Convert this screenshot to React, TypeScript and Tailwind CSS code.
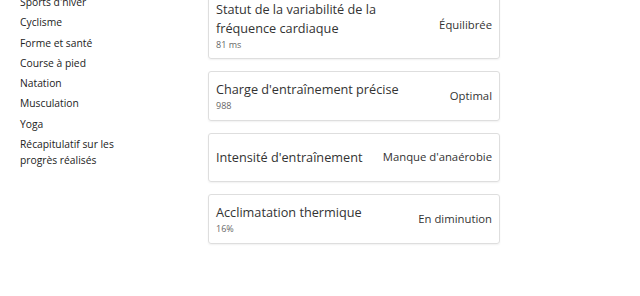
const sports = [
  "Sports d'hiver",
  "Cyclisme",
  "Forme et santé",
  "Course à pied",
  "Natation",
  "Musculation",
  "Yoga",
  "Récapitulatif sur les progrès réalisés",
];

const stats = [
  { title: "Statut de la variabilité de la fréquence cardiaque", sub: "81 ms", value: "Équilibrée" },
  { title: "Charge d'entraînement précise", sub: "988", value: "Optimal" },
  { title: "Intensité d'entraînement", sub: "", value: "Manque d'anaérobie" },
  { title: "Acclimatation thermique", sub: "16%", value: "En diminution" },
];

function App() {
  return (
    <div className="h-[296px] w-[640px] overflow-hidden bg-white font-['Open_Sans',sans-serif]">
      <div className="flex mt-[-9px]">
        {/* SIDEBAR */}
        <ul className="w-[118px] ml-[20px] mt-[3px] flex flex-col gap-[4.3px]">
          {sports.map((s) => (
            <li key={s} className="text-[10.3px] leading-[16px] text-[#222]">
              {s}
            </li>
          ))}
        </ul>

        {/* CARDS */}
        <div className="ml-[70px] w-[292px] flex flex-col gap-[12px]">
          {stats.map((s) => (
            <div
              key={s.title}
              className="min-h-[49.5px] border border-[#dedede] rounded-[3px] shadow-[0_1px_2px_rgba(0,0,0,0.06)] px-[7px] pt-[8px] pb-[7px] flex items-center justify-between gap-3"
            >
              <div className="flex flex-col min-w-0">
                <span className={`text-[12.7px] leading-[19px] text-[#333] ${s.title.length > 40 ? "max-w-[172px]" : ""}`}>
                  {s.title}
                </span>
                {s.sub && (
                  <span className="text-[9px] leading-[13px] text-[#666]">{s.sub}</span>
                )}
              </div>
              <span className="text-[11.3px] text-[#333] whitespace-nowrap">{s.value}</span>
            </div>
          ))}
        </div>
      </div>
    </div>
  );
}

export default App;
